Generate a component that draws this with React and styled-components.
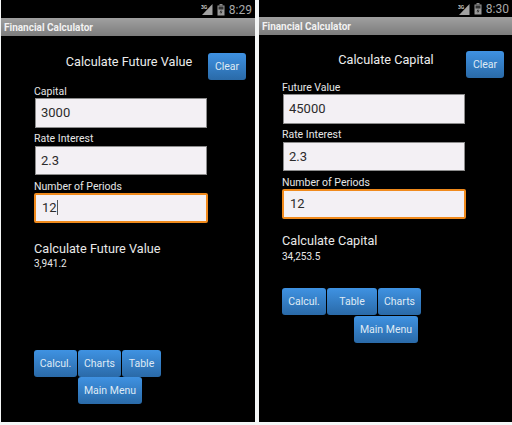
import React from "react";
import styled, { createGlobalStyle } from "styled-components";

const GlobalStyle = createGlobalStyle`
  html, body {
    margin: 0;
    padding: 0;
    background: #f4f6f6;
  }
  body {
    font-family: "Roboto", "Liberation Sans", sans-serif;
    overflow: hidden;
  }
`;

const Page = styled.div`
  width: 512px;
  height: 425px;
  display: flex;
  gap: 4px;
  padding-left: 1px;
  box-sizing: border-box;
  align-items: flex-start;
`;

const Phone = styled.div`
  width: ${(p) => p.$width}px;
  height: 422px;
  background: #000;
  display: flex;
  flex-direction: column;
  flex: none;
`;

const StatusBar = styled.div`
  height: ${(p) => p.$height}px;
  flex: none;
  display: flex;
  align-items: center;
  justify-content: flex-end;
  gap: 4px;
  padding: 1px 3px 0 0;
  box-sizing: border-box;
  background: #000;
`;

const Clock = styled.span`
  color: #a9a9a9;
  font-size: 12px;
`;

const TitleBar = styled.div`
  height: 18px;
  flex: none;
  display: flex;
  align-items: center;
  padding-left: 3px;
  background: linear-gradient(#a0a0a0, #7c7c7c);
  color: #f2f2f2;
  font-size: 10px;
  font-weight: 700;
`;

const Content = styled.div`
  flex: 1;
  display: flex;
  flex-direction: column;
  padding: ${(p) => p.$top}px 0 0 ${(p) => p.$left}px;
`;

const Header = styled.div`
  display: flex;
  align-items: flex-start;
  height: 27px;
`;

const Heading = styled.div`
  width: ${(p) => p.$width}px;
  text-align: center;
  color: #ececec;
  font-size: 12.7px;
  line-height: 18px;
  flex: none;
`;

const Form = styled.div`
  width: ${(p) => p.$width}px;
  margin-top: ${(p) => p.$top}px;
  display: flex;
  flex-direction: column;
`;

const Label = styled.div`
  color: #e6e6e6;
  font-size: 10.5px;
  line-height: 12px;
  height: 12px;
  margin-top: ${(p) => p.$top || 0}px;
`;

const Field = styled.div`
  height: 29.5px;
  box-sizing: border-box;
  margin: ${(p) => (p.$focused ? "0.5px 0 0" : "0.5px 1px 0")};
  display: flex;
  align-items: center;
  padding-left: ${(p) => (p.$focused ? 6 : 5)}px;
  background: #f3f0f4;
  color: #2b2b2b;
  font-size: 13px;
  border: ${(p) => (p.$focused ? "2px solid #f08a1c" : "1px solid #8c8c8c")};
  border-radius: ${(p) => (p.$focused ? 2 : 0)}px;
`;

const Caret = styled.span`
  width: 1px;
  height: 15px;
  background: #555;
`;

const ResultTitle = styled.div`
  color: #e8e8e8;
  font-size: 12.7px;
  line-height: 16px;
  margin-top: ${(p) => p.$top}px;
`;

const ResultValue = styled.div`
  color: #e8e8e8;
  font-size: 10px;
  line-height: 13px;
  margin-top: ${(p) => p.$top || 0}px;
`;

const ButtonRow = styled.div`
  display: flex;
  gap: 1px;
  margin-top: ${(p) => p.$top || 0}px;
  margin-left: ${(p) => p.$indent || 0}px;
`;

const Button = styled.div`
  width: ${(p) => p.$width}px;
  height: 27px;
  flex: none;
  display: flex;
  align-items: center;
  justify-content: center;
  background: linear-gradient(#3f92e2, #2a6aa8);
  border-radius: 3px;
  color: #dfeaf5;
  font-size: 10.5px;
`;

const ClearButton = styled(Button)`
  margin-left: ${(p) => p.$offset}px;
`;

// status icons: 3G signal and charging battery
const SignalIcon = () => (
  <svg width="12" height="11" viewBox="0 0 12 11">
    <polygon points="11.5,0 11.5,11 1,11" fill="#a2a2a2" />
    <text x="0" y="4.5" fontSize="5" fontWeight="700" fill="#c4c4c4" fontFamily="Roboto, sans-serif">
      3G
    </text>
  </svg>
);

const BatteryIcon = () => (
  <svg width="8" height="12" viewBox="0 0 8 12">
    <rect x="2.5" y="0" width="3" height="1.5" fill="#8e8e8e" />
    <rect x="0.5" y="1.5" width="7" height="10" fill="#9a9a9a" />
    <rect x="1.5" y="2.5" width="5" height="3" fill="#333" />
    <polygon points="4.5,5.5 2.5,8.5 4,8.5 3.5,10.5 5.5,7.5 4,7.5" fill="#222" />
  </svg>
);

const Screen = ({ width, statusHeight, contentTop, contentLeft, clock, children }) => (
  <Phone $width={width}>
    <StatusBar $height={statusHeight}>
      <SignalIcon />
      <BatteryIcon />
      <Clock>{clock}</Clock>
    </StatusBar>
    <TitleBar>Financial Calculator</TitleBar>
    <Content $top={contentTop} $left={contentLeft}>
      {children}
    </Content>
  </Phone>
);

export default function App() {
  return (
    <Page>
      <GlobalStyle />
      <Screen width={254} statusHeight={18} contentTop={17} contentLeft={33} clock="8:29">
        <Header>
          <Heading $width={190}>Calculate Future Value</Heading>
          <ClearButton $width={38} $offset={-16}>Clear</ClearButton>
        </Header>
        <Form $width={174} $top={5.5}>
          <Label>Capital</Label>
          <Field>3000</Field>
          <Label $top={5.5}>Rate Interest</Label>
          <Field>2.3</Field>
          <Label $top={5.5}>Number of Periods</Label>
          <Field $focused>
            12
            <Caret />
          </Field>
        </Form>
        <ResultTitle $top={18}>Calculate Future Value</ResultTitle>
        <ResultValue>3,941.2</ResultValue>
        <ButtonRow $top={80}>
          <Button $width={43}>Calcul.</Button>
          <Button $width={43}>Charts</Button>
          <Button $width={39}>Table</Button>
        </ButtonRow>
        <ButtonRow $top={0.5} $indent={44}>
          <Button $width={64}>Main Menu</Button>
        </ButtonRow>
      </Screen>
      <Screen width={253} statusHeight={17} contentTop={16} contentLeft={23} clock="8:30">
        <Header>
          <Heading $width={208}>Calculate Capital</Heading>
          <ClearButton $width={38} $offset={-24}>Clear</ClearButton>
        </Header>
        <Form $width={184} $top={3.5}>
          <Label>Future Value</Label>
          <Field>45000</Field>
          <Label $top={5.5}>Rate Interest</Label>
          <Field>2.3</Field>
          <Label $top={5.5}>Number of Periods</Label>
          <Field $focused>12</Field>
        </Form>
        <ResultTitle $top={14.5}>Calculate Capital</ResultTitle>
        <ResultValue $top={1}>34,253.5</ResultValue>
        <ButtonRow $top={25}>
          <Button $width={44}>Calcul.</Button>
          <Button $width={50}>Table</Button>
          <Button $width={43}>Charts</Button>
        </ButtonRow>
        <ButtonRow $top={0.5} $indent={72}>
          <Button $width={64}>Main Menu</Button>
        </ButtonRow>
      </Screen>
    </Page>
  );
}
